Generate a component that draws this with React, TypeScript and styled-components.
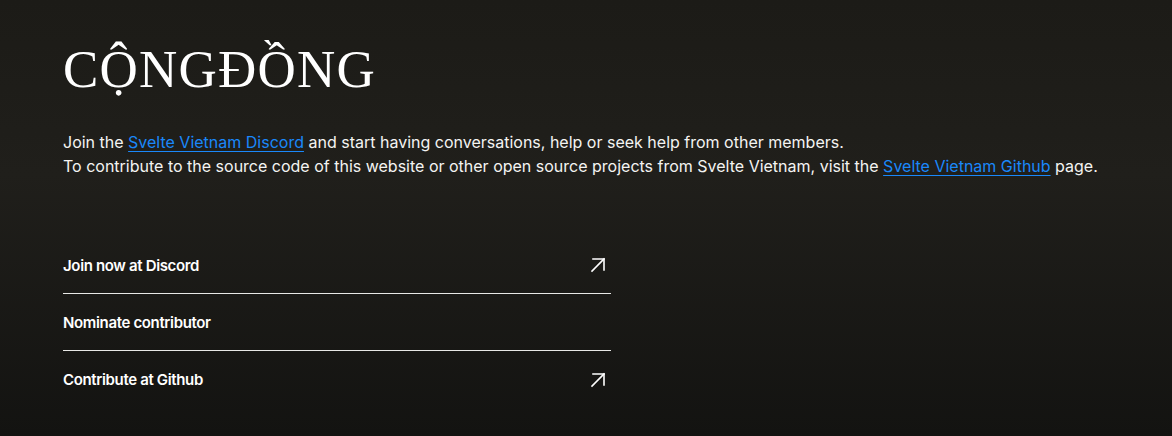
import React from 'react'
import styled, { createGlobalStyle } from 'styled-components';

const GlobalStyle = createGlobalStyle`
    html, body {
        margin: 0;
        padding: 0;
        background: #1a1916;
    }
    body {
        font-family: Inter, "Noto Sans", sans-serif;
        color: #ffffff;
    }
`;

const links = [
    { label: 'Join now at Discord', external: true },
    { label: 'Nominate contributor', external: false },
    { label: 'Contribute at Github', external: true },
];

const Arrow = () => (
    <svg width="16" height="16" viewBox="0 0 16 16" fill="none" stroke="currentColor" strokeWidth="1.6" strokeLinecap="square">
        <path d="M2 14L14 2" />
        <path d="M3 2H14V13" />
    </svg>
);

const App = () => {
  return (
    <>
        <GlobalStyle />
        <Page>
            <Title>CỘNGĐỒNG</Title>
            <Intro>
                Join the <Link href="#">Svelte Vietnam Discord</Link> and start having conversations, help or seek help from other members.
                <br />
                To contribute to the source code of this website or other open source projects from Svelte Vietnam, visit the <Link href="#">Svelte Vietnam Github</Link> page.
            </Intro>
            <List>
                {links.map((item) => (
                    <Item key={item.label}>
                        <span>{item.label}</span>
                        {item.external && <Arrow />}
                    </Item>
                ))}
            </List>
        </Page>
    </>
  )
}

export default App;

const Page = styled.div`
    height: 436px;
    box-sizing: border-box;
    padding: 37px 63px 0 63px;
    background: linear-gradient(180deg, #1c1b17 0%, #201f1b 40%, #131311 100%);
    overflow: hidden;
`;
const Title = styled.h1`
    margin: 0;
    font-family: "Liberation Serif", serif;
    font-weight: 400;
    font-size: 53px;
    line-height: 64px;
    letter-spacing: 1.2px;
`;
const Intro = styled.p`
    margin: 29px 0 0 0;
    font-size: 16px;
    line-height: 24px;
    color: #f4f4f2;
`;
const Link = styled.a`
    color: #1a88fa;
    text-decoration: underline;
    text-underline-offset: 3px;
    text-decoration-thickness: 1px;
`;
const List = styled.ul`
    list-style: none;
    margin: 59px 0 0 0;
    padding: 0;
    width: 548px;
`;
const Item = styled.li`
    height: 57px;
    box-sizing: border-box;
    display: flex;
    align-items: center;
    justify-content: space-between;
    font-size: 15px;
    font-weight: 600;
    letter-spacing: -0.35px;
    color: #ffffff;
    border-bottom: 1px solid #e8e8e6;
    &:last-child {
        border-bottom: none;
    }
    svg {
        margin-right: 5px;
    }
`;
